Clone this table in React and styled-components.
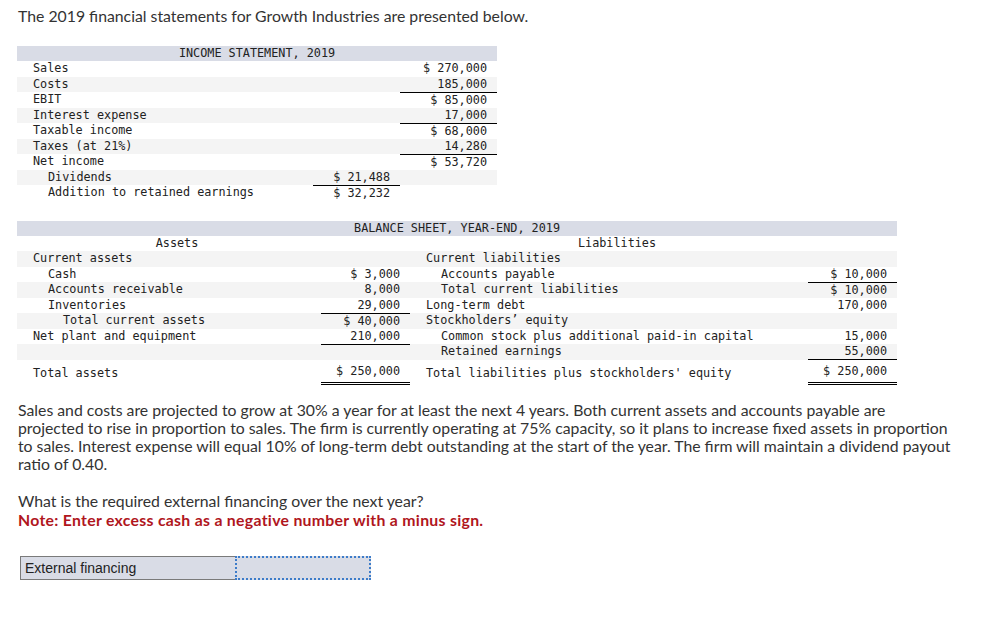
import React from "react";
import styled, { createGlobalStyle } from "styled-components";

const GlobalStyle = createGlobalStyle`
  body {
    margin: 0;
    background: #ffffff;
    font-family: Lato, "Open Sans", sans-serif;
    color: #333333;
  }
`;

const Page = styled.div`
  padding: 7px 17px 0 17px;
  width: 972px;
`;

const Intro = styled.p`
  margin: 0 0 ${(p) => p.$gap || 20}px 1px;
  font-size: 15.8px;
  line-height: 18px;
  white-space: nowrap;
`;

const Sheet = styled.table`
  border-collapse: collapse;
  font-family: "DejaVu Sans Mono", "Liberation Mono", monospace;
  font-size: 11.8px;
  color: #222222;
  table-layout: fixed;
  width: ${(p) => p.$width}px;
  margin-bottom: ${(p) => p.$gap || 0}px;
`;

const Row = styled.tr`
  height: 15.5px;
  &:nth-child(odd) {
    background: #f4f4f4;
  }
`;

const HeadRow = styled.tr`
  height: 15px;
  background: #d9dce6 !important;
`;

const TotalRow = styled.tr`
  height: 24px;
  background: #ffffff;
`;

const HeadCell = styled.td`
  padding: 0;
  text-align: center;
  white-space: pre;
  line-height: 15px;
`;

const Label = styled.td`
  padding: 0 0 0 ${(p) => 16 + (p.$indent || 0) * 15}px;
  white-space: pre;
  line-height: 15px;
  text-align: ${(p) => (p.$center ? "center" : "left")};
  vertical-align: ${(p) => (p.$bottom ? "bottom" : "middle")};
  padding-bottom: ${(p) => (p.$bottom ? 3 : 0)}px;
`;

const Num = styled.td`
  padding: 0 10px 0 0;
  text-align: right;
  white-space: pre;
  line-height: 15px;
  vertical-align: ${(p) => (p.$bottom ? "bottom" : "middle")};
  padding-bottom: ${(p) => (p.$bottom ? 3 : 0)}px;
  border-bottom: ${(p) =>
    p.$line === "double" ? "3px double #000" : p.$line ? "1px solid #000" : "none"};
`;

const Question = styled.p`
  margin: 0 0 0 1px;
  font-size: 15.8px;
  line-height: 19px;
`;

const Note = styled.p`
  margin: 0 0 27px 1px;
  font-size: 15.8px;
  line-height: 19px;
  font-weight: 700;
  letter-spacing: 0.3px;
  color: #b0161d;
`;

const AnswerRow = styled.div`
  display: flex;
  margin-left: 3px;
  height: 24px;
  width: 351px;
`;

const AnswerLabel = styled.div`
  flex: 0 0 215px;
  box-sizing: border-box;
  border: 1px solid #7a7a7a;
  border-right: none;
  background: #d9dce6;
  font-family: "Liberation Sans", Arial, sans-serif;
  font-size: 14px;
  color: #222222;
  padding: 3px 0 0 4px;
`;

const AnswerInput = styled.input`
  flex: 1 1 auto;
  min-width: 0;
  width: 0;
  box-sizing: border-box;
  border: 2px dotted #3d7cc9;
  background: #d9dce6;
  outline: none;
  margin: 0;
  padding: 0 4px;
  height: 24px;
`;

const income = [
  ["Sales", 0, "", "$ 270,000", false, false],
  ["Costs", 0, "", "185,000", false, true],
  ["EBIT", 0, "", "$ 85,000", false, false],
  ["Interest expense", 0, "", "17,000", false, true],
  ["Taxable income", 0, "", "$ 68,000", false, false],
  ["Taxes (at 21%)", 0, "", "14,280", false, true],
  ["Net income", 0, "", "$ 53,720", false, false],
  ["Dividends", 1, "$ 21,488", "", true, false],
  ["Addition to retained earnings", 1, "$ 32,232", "", false, false],
];

const balance = [
  ["Current assets", 0, "", false, "Current liabilities", 0, "", false],
  ["Cash", 1, "$ 3,000", false, "Accounts payable", 1, "$ 10,000", true],
  ["Accounts receivable", 1, "8,000", false, "Total current liabilities", 1, "$ 10,000", false],
  ["Inventories", 1, "29,000", true, "Long-term debt", 0, "170,000", false],
  ["Total current assets", 2, "$ 40,000", false, "Stockholders’ equity", 0, "", false],
  ["Net plant and equipment", 0, "210,000", true, "Common stock plus additional paid-in capital", 1, "15,000", false],
  ["", 0, "", false, "Retained earnings", 1, "55,000", true],
];

export default function App() {
  return (
    <Page>
      <GlobalStyle />
      <Intro $gap={21}>The 2019 financial statements for Growth Industries are presented below.</Intro>

      <Sheet $width={480} $gap={20}>
        <colgroup>
          <col style={{ width: 296 }} />
          <col style={{ width: 87 }} />
          <col style={{ width: 97 }} />
        </colgroup>
        <tbody>
          <HeadRow>
            <HeadCell colSpan={3}>INCOME STATEMENT, 2019</HeadCell>
          </HeadRow>
          {income.map(([label, indent, mid, right, midLine, rightLine]) => (
            <Row key={label}>
              <Label $indent={indent}>{label}</Label>
              <Num $line={midLine}>{mid}</Num>
              <Num $line={rightLine}>{right}</Num>
            </Row>
          ))}
        </tbody>
      </Sheet>

      <Sheet $width={880} $gap={16}>
        <colgroup>
          <col style={{ width: 304 }} />
          <col style={{ width: 89 }} />
          <col style={{ width: 398 }} />
          <col style={{ width: 89 }} />
        </colgroup>
        <tbody>
          <HeadRow>
            <HeadCell colSpan={4}>BALANCE SHEET, YEAR-END, 2019</HeadCell>
          </HeadRow>
          <Row>
            <Label $center>Assets</Label>
            <Num />
            <Label $center>Liabilities</Label>
            <Num />
          </Row>
          {balance.map(([la, li, lv, ll, ra, ri, rv, rl]) => (
            <Row key={ra}>
              <Label $indent={li}>{la}</Label>
              <Num $line={ll}>{lv}</Num>
              <Label $indent={ri}>{ra}</Label>
              <Num $line={rl}>{rv}</Num>
            </Row>
          ))}
          <TotalRow>
            <Label $bottom>Total assets</Label>
            <Num $bottom $line="double">$ 250,000</Num>
            <Label $bottom>Total liabilities plus stockholders' equity</Label>
            <Num $bottom $line="double">$ 250,000</Num>
          </TotalRow>
        </tbody>
      </Sheet>

      <Intro $gap={18}>
        Sales and costs are projected to grow at 30% a year for at least the next 4 years. Both current assets and accounts payable are
        <br />
        projected to rise in proportion to sales. The firm is currently operating at 75% capacity, so it plans to increase fixed assets in proportion
        <br />
        to sales. Interest expense will equal 10% of long-term debt outstanding at the start of the year. The firm will maintain a dividend payout
        <br />
        ratio of 0.40.
      </Intro>

      <Question>What is the required external financing over the next year?</Question>
      <Note>Note: Enter excess cash as a negative number with a minus sign.</Note>

      <AnswerRow>
        <AnswerLabel>External financing</AnswerLabel>
        <AnswerInput type="text" aria-label="External financing" />
      </AnswerRow>
    </Page>
  );
}
